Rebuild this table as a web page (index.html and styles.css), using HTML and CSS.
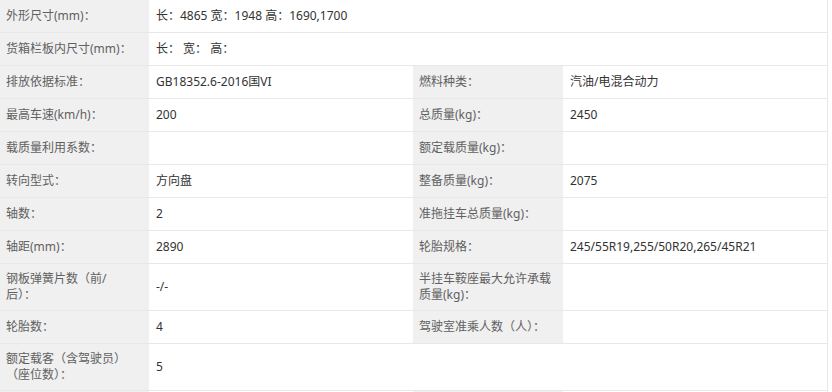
FILE: index.html
```html
<!DOCTYPE html>
<html lang="zh-CN">
<head>
<meta charset="utf-8">
<link rel="stylesheet" href="styles.css">
</head>
<body>
<table class="spec">
  <colgroup>
    <col class="c-label"><col class="c-value"><col class="c-label2"><col class="c-value2">
  </colgroup>
  <tbody>
    <tr><th>外形尺寸(mm)：</th><td colspan="3">长：4865 宽：1948 高：1690,1700</td></tr>
    <tr><th>货箱栏板内尺寸(mm)：</th><td colspan="3">长： 宽： 高：</td></tr>
    <tr><th>排放依据标准：</th><td>GB18352.6-2016国VI</td><th>燃料种类：</th><td>汽油/电混合动力</td></tr>
    <tr><th>最高车速(km/h)：</th><td>200</td><th>总质量(kg)：</th><td>2450</td></tr>
    <tr><th>载质量利用系数：</th><td></td><th>额定载质量(kg)：</th><td></td></tr>
    <tr><th>转向型式：</th><td>方向盘</td><th>整备质量(kg)：</th><td>2075</td></tr>
    <tr><th>轴数：</th><td>2</td><th>准拖挂车总质量(kg)：</th><td></td></tr>
    <tr><th>轴距(mm)：</th><td>2890</td><th>轮胎规格：</th><td>245/55R19,255/50R20,265/45R21</td></tr>
    <tr><th>钢板弹簧片数（前/<br>后）：</th><td>-/-</td><th>半挂车鞍座最大允许承载质量(kg)：</th><td></td></tr>
    <tr><th>轮胎数：</th><td>4</td><th>驾驶室准乘人数（人）：</th><td></td></tr>
    <tr><th>额定载客（含驾驶员）（座位数）：</th><td colspan="3">5</td></tr>
    <tr><th>&nbsp;</th><td></td><th></th><td></td></tr>
  </tbody>
</table>
</body>
</html>
```
FILE: styles.css
```css
html, body {
  margin: 0;
  padding: 0;
  background: #ffffff;
}
body {
  font-family: "Noto Sans", "Noto Sans CJK SC", sans-serif;
  font-size: 12px;
  overflow: hidden;
}
.spec {
  border-collapse: collapse;
  table-layout: fixed;
  width: 827px;
  margin-top: -1px;
}
.c-label { width: 149px; }
.c-value { width: 264px; }
.c-label2 { width: 150px; }
.c-value2 { width: 264px; }
.spec tr {
  height: 33px;
}
.spec th,
.spec td {
  border-top: 1px solid #e8e8e8;
  border-bottom: 1px solid #e8e8e8;
  padding: 7px 6px;
  line-height: 16px;
  text-align: left;
  vertical-align: middle;
  font-weight: normal;
}
.spec th {
  background: #f0f0f0;
  color: #606060;
  padding-right: 9px;
}
.spec td {
  background: #ffffff;
  color: #333333;
  padding-left: 7px;
}
.spec td:last-child {
  border-right: 1px solid #e8e8e8;
}
```
